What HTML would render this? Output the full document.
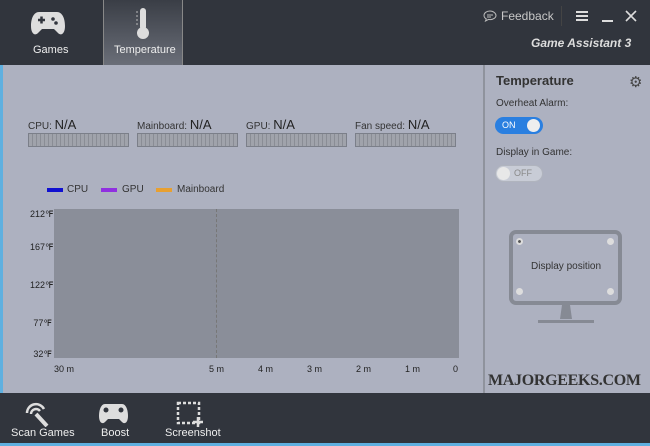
<!DOCTYPE html><html><head><style>
*{margin:0;padding:0;box-sizing:border-box}
body{width:650px;height:446px;overflow:hidden;background:#adb1c0;font-family:"Liberation Sans",sans-serif;position:relative;font-size:11px;color:#333}
.abs{position:absolute}
#top{left:0;top:0;width:650px;height:65px;background:#31353d}
#bot{left:0;top:393px;width:650px;height:51px;background:#31353d}
.lbl{color:#eee;font-size:11px}
.bar{position:absolute;top:133px;width:101px;height:14px;border:1px solid #7b7f89;background:repeating-linear-gradient(90deg,#a0a3ab 0 3px,#8a8d95 3px 4px);}
.cap{position:absolute;top:117px;font-size:10px;color:#333}
.cap b{font-weight:normal;font-size:13px;color:#222}
.yl{position:absolute;left:30px;font-size:9px;color:#222;width:22px;text-align:right}
.xl{position:absolute;top:364px;font-size:9px;color:#222}
</style></head><body>
<div class="abs" id="top"></div>
<div class="abs" style="left:103px;top:0;width:80px;height:65px;background:linear-gradient(#3a3e46,#6a6e78);border-left:1px solid #888;border-right:1px solid #888"></div>
<svg class="abs" style="left:31px;top:10px" width="34" height="26" viewBox="0 0 34 26"><path d="M8 2h18c5 0 8 6 8 14 0 8-4 10-7 7l-4-4H11l-4 4c-3 3-7 1-7-7C0 8 3 2 8 2z" fill="#ddd"/><path d="M7 10h7M10.5 6.5v7" stroke="#31353d" stroke-width="2.5"/><circle cx="22" cy="9" r="1.8" fill="#31353d"/><circle cx="25" cy="13" r="1.8" fill="#31353d"/></svg>
<div class="abs lbl" style="left:33px;top:44px">Games</div>
<svg class="abs" style="left:135px;top:7px" width="16" height="33" viewBox="0 0 16 33"><rect x="5" y="1" width="6" height="22" rx="3" fill="#ddd"/><circle cx="8" cy="26" r="6" fill="#ddd"/><path d="M1 5h2M1 9h2M1 13h2M1 17h2" stroke="#bbb"/></svg>
<div class="abs lbl" style="left:114px;top:44px">Temperature</div>
<svg class="abs" style="left:483px;top:10px" width="14" height="12" viewBox="0 0 14 12"><path d="M7 1C3.5 1 1 3 1 5.5c0 1.5 1 2.7 2.3 3.4L2.5 11l3-1.6C6 9.5 6.5 9.6 7 9.6c3.5 0 6-2 6-4.1S10.5 1 7 1z" fill="none" stroke="#bbb"/><path d="M4 5h6M4 7h4" stroke="#bbb"/></svg>
<div class="abs" style="left:501px;top:9px;color:#c8c8c8;font-size:12px">Feedback</div>
<div class="abs" style="left:561px;top:6px;width:1px;height:20px;background:#444"></div>
<div class="abs" style="left:576px;top:11px;width:12px;height:10px;border-top:2px solid #ddd;border-bottom:2px solid #ddd"></div>
<div class="abs" style="left:576px;top:15px;width:12px;height:2px;background:#ddd"></div>
<div class="abs" style="left:602px;top:20px;width:11px;height:2px;background:#ddd"></div>
<svg class="abs" style="left:625px;top:10px" width="12" height="12"><path d="M1 1l10 10M11 1L1 11" stroke="#ddd" stroke-width="1.6"/></svg>
<div class="abs" style="left:531px;top:36px;color:#ddd;font-size:12px;font-weight:bold;font-style:italic">Game Assistant 3</div>
<div class="abs" style="left:0;top:65px;width:3px;height:381px;background:#5fb0e0"></div>
<div class="abs" style="left:483px;top:65px;width:2px;height:328px;background:#8f939d"></div>

<div class="cap" style="left:28px">CPU: <b>N/A</b></div><div class="bar" style="left:28px"></div>
<div class="cap" style="left:137px">Mainboard: <b>N/A</b></div><div class="bar" style="left:137px"></div>
<div class="cap" style="left:246px">GPU: <b>N/A</b></div><div class="bar" style="left:246px"></div>
<div class="cap" style="left:355px">Fan speed: <b>N/A</b></div><div class="bar" style="left:355px"></div>

<div class="abs" style="left:47px;top:188px;width:16px;height:4px;background:#1010d0"></div><div class="abs" style="left:67px;top:184px;font-size:10px">CPU</div>
<div class="abs" style="left:101px;top:188px;width:16px;height:4px;background:#9030e0"></div><div class="abs" style="left:122px;top:184px;font-size:10px">GPU</div>
<div class="abs" style="left:156px;top:188px;width:16px;height:4px;background:#e8a030"></div><div class="abs" style="left:177px;top:184px;font-size:10px">Mainboard</div>

<div class="abs" style="left:54px;top:209px;width:405px;height:149px;background:#8a8e99"></div>
<div class="abs" style="left:216px;top:209px;width:0;height:149px;border-left:1px dashed #777"></div>
<div class="yl" style="top:209px">212℉</div><div class="yl" style="top:242px">167℉</div><div class="yl" style="top:280px">122℉</div><div class="yl" style="top:318px">77℉</div><div class="yl" style="top:349px">32℉</div>
<div class="xl" style="left:54px">30 m</div><div class="xl" style="left:209px">5 m</div><div class="xl" style="left:258px">4 m</div><div class="xl" style="left:307px">3 m</div><div class="xl" style="left:356px">2 m</div><div class="xl" style="left:405px">1 m</div><div class="xl" style="left:453px">0</div>

<div class="abs" style="left:496px;top:73px;font-size:13px;font-weight:bold;color:#333">Temperature</div>
<div class="abs" style="left:629px;top:73px;font-size:15px;color:#444">⚙</div>
<div class="abs" style="left:496px;top:98px;font-size:10px">Overheat Alarm:</div>
<div class="abs" style="left:495px;top:117px;width:48px;height:17px;border-radius:9px;background:#2a7fe0"></div>
<div class="abs" style="left:502px;top:120px;font-size:9px;color:#fff">ON</div>
<div class="abs" style="left:527px;top:119px;width:13px;height:13px;border-radius:50%;background:#eee"></div>
<div class="abs" style="left:496px;top:147px;font-size:10px">Display in Game:</div>
<div class="abs" style="left:495px;top:165px;width:48px;height:17px;border-radius:9px;background:#c8ccd6;border:1px solid #b0b4be"></div>
<div class="abs" style="left:497px;top:167px;width:13px;height:13px;border-radius:50%;background:#e8e8e8"></div>
<div class="abs" style="left:514px;top:168px;font-size:9px;color:#888">OFF</div>

<div class="abs" style="left:509px;top:230px;width:113px;height:75px;border:4px solid #868a94;border-radius:7px"></div>
<div class="abs" style="left:531px;top:261px;font-size:10px;color:#333">Display position</div>
<div class="abs" style="left:516px;top:238px;width:7px;height:7px;border-radius:50%;background:#ddd;border:2px solid #ddd;box-shadow:inset 0 0 0 2px #555"></div>
<div class="abs" style="left:607px;top:238px;width:7px;height:7px;border-radius:50%;background:#ddd"></div>
<div class="abs" style="left:516px;top:288px;width:7px;height:7px;border-radius:50%;background:#ddd"></div>
<div class="abs" style="left:607px;top:288px;width:7px;height:7px;border-radius:50%;background:#ddd"></div>
<svg class="abs" style="left:537px;top:305px" width="58" height="20"><path d="M25 0h8l2 14h-12z" fill="#868a94"/><rect x="1" y="15" width="56" height="3" fill="#868a94"/></svg>
<div class="abs" style="left:488px;top:372px;font-family:'Liberation Serif',serif;font-weight:bold;font-size:16px;color:#333;letter-spacing:-0.3px;white-space:nowrap">MAJORGEEKS.COM</div>

<div class="abs" id="bot"></div>
<div class="abs" style="left:0;top:443px;width:650px;height:3px;background:#5fb0e0"></div>
<svg class="abs" style="left:24px;top:401px" width="28" height="26" viewBox="0 0 28 26"><path d="M3 12a9 9 0 0 1 17-4M7 13a5 5 0 0 1 9-3" fill="none" stroke="#ddd" stroke-width="2.5"/><path d="M12 13l11 12" stroke="#ddd" stroke-width="4"/></svg>
<div class="abs lbl" style="left:11px;top:427px">Scan Games</div>
<svg class="abs" style="left:99px;top:403px" width="29" height="21" viewBox="0 0 29 21"><path d="M6 1h17c4 0 6 6 6 12s-3 9-6 6l-3-3H9l-3 3c-3 3-6 0-6-6S2 1 6 1z" fill="#ddd"/><circle cx="7" cy="7" r="2.5" fill="#31353d"/><circle cx="22" cy="7" r="2.5" fill="#31353d"/></svg>
<div class="abs lbl" style="left:101px;top:427px">Boost</div>
<svg class="abs" style="left:176px;top:401px" width="28" height="26"><rect x="2" y="2" width="21" height="20" fill="none" stroke="#ddd" stroke-width="2.5" stroke-dasharray="3 2"/><path d="M22 16v10M17 21h10" stroke="#ddd" stroke-width="2.5"/></svg>
<div class="abs lbl" style="left:165px;top:427px">Screenshot</div>
</body></html>
